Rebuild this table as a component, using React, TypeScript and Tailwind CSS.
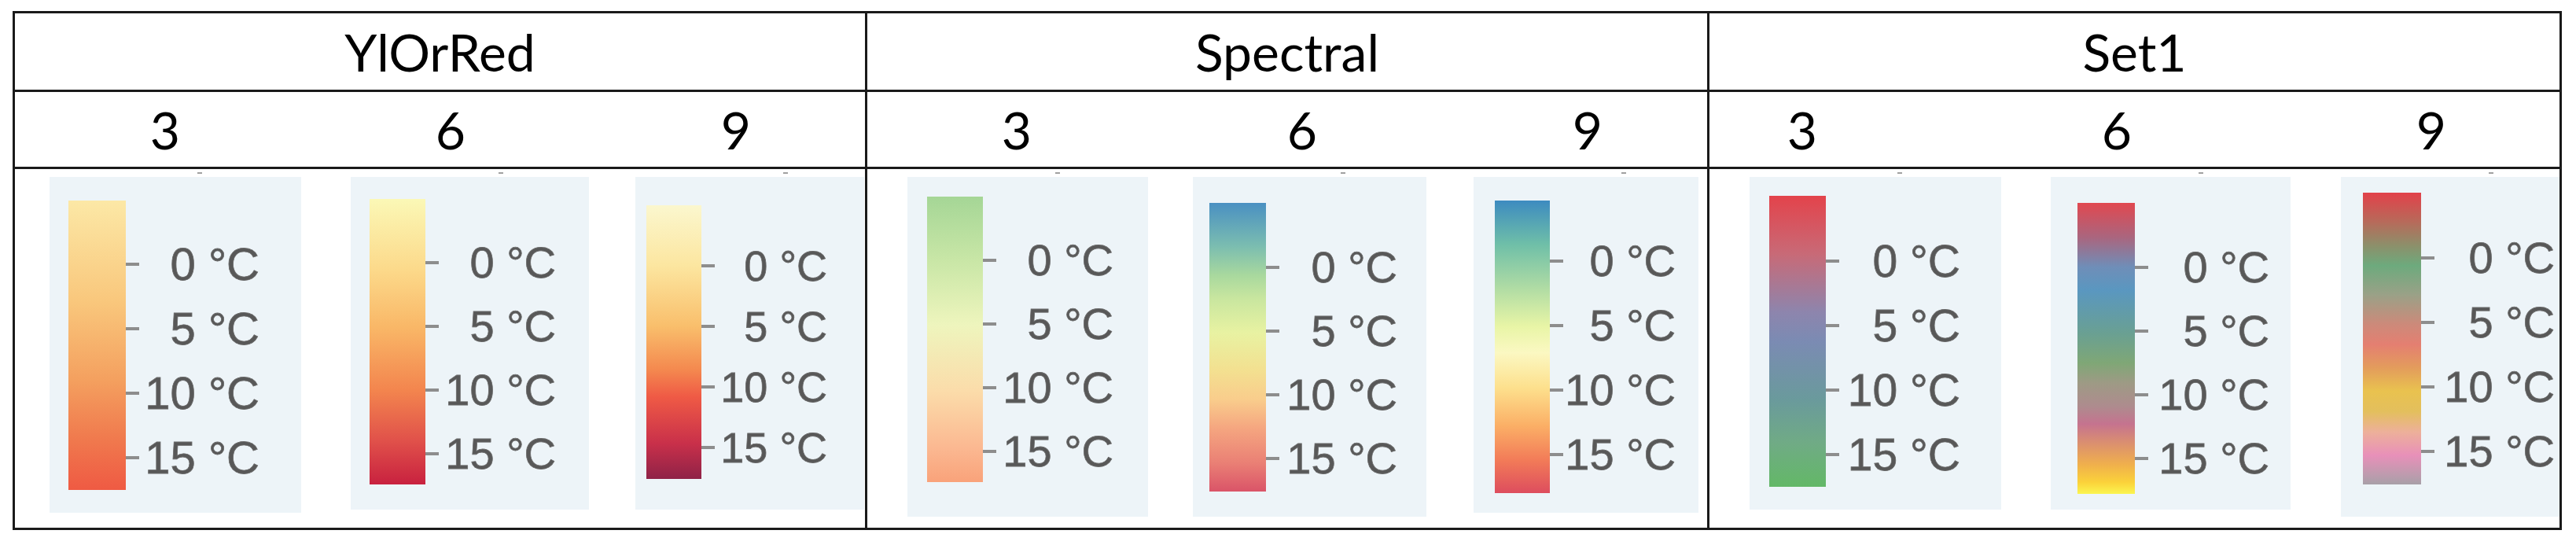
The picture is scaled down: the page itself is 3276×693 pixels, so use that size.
import React from 'react';

type Legend = {
  wrap: string;
  panel: string;
  bar: string;
  ticks: string;
  row: string;
  label: string;
};

type Scheme = {
  name: string;
  col: string;
  counts: string;
  legends: Legend[];
};

const labels = ['0 °C', '5 °C', '10 °C', '15 °C'];

const schemes: Scheme[] = [
  {
    name: 'YlOrRed',
    col: 'w-[1084px] border-r-[3px]',
    counts: 'pl-[141px] gap-[263px]',
    legends: [
      {
        wrap: 'ml-[44px] w-[320px]',
        panel: 'h-[427px] pl-[24px] pt-[30px]',
        bar: 'w-[73px] h-[368px] bg-[linear-gradient(to_bottom,#fce8a6,#f9c77c_35%,#f4a05f_62%,#f07a4e_82%,#ef5a43)]',
        ticks: 'pt-[40px]',
        row: 'h-[82px]',
        label: 'w-[153px] text-[58px]',
      },
      {
        wrap: 'ml-[63px] w-[303px]',
        panel: 'h-[423px] pl-[24px] pt-[28px]',
        bar: 'w-[71px] h-[363px] bg-[linear-gradient(to_bottom,#fbf8b6,#fcd98a_25%,#f9b767_45%,#f3854e_67%,#e0504a_85%,#c8213f)]',
        ticks: 'pt-[40px]',
        row: 'h-[81px]',
        label: 'w-[149px] text-[56px]',
      },
      {
        wrap: 'ml-[59px] w-[291px]',
        panel: 'h-[423px] pl-[14px] pt-[36px]',
        bar: 'w-[70px] h-[348px] bg-[linear-gradient(to_bottom,#fbf7ce,#fce6a0_22%,#f9bf6c_44%,#f4894f_60%,#ef5a45_70%,#c9304a_87%,#8f2247)]',
        ticks: 'pt-[38px]',
        row: 'h-[77px]',
        label: 'w-[143px] text-[54px]',
      },
    ],
  },
  {
    name: 'Spectral',
    col: 'w-[1071px] border-r-[3px]',
    counts: 'pl-[140px] gap-[263px]',
    legends: [
      {
        wrap: 'ml-[51px] w-[306px]',
        panel: 'h-[432px] pl-[25px] pt-[25px]',
        bar: 'w-[71px] h-[363px] bg-[linear-gradient(to_bottom,#a5d696,#c8e6a6_22%,#eef5bd_45%,#fbdcaa_68%,#fbb891_88%,#f9a27a)]',
        ticks: 'pt-[40px]',
        row: 'h-[81px]',
        label: 'w-[149px] text-[56px]',
      },
      {
        wrap: 'ml-[57px] w-[297px]',
        panel: 'h-[432px] pl-[21px] pt-[33px]',
        bar: 'w-[72px] h-[367px] bg-[linear-gradient(to_bottom,#4a90c2,#7bbdb0_15%,#a8d89e_25%,#c8e69f_33%,#e8f2a2_45%,#f3e090_58%,#f9cd8c_68%,#f5a680_78%,#ea8075_90%,#da5468)]',
        ticks: 'pt-[41px]',
        row: 'h-[81px]',
        label: 'w-[150px] text-[56px]',
      },
      {
        wrap: 'ml-[60px] w-[286px]',
        panel: 'h-[427px] pl-[27px] pt-[30px]',
        bar: 'w-[70px] h-[372px] bg-[linear-gradient(to_bottom,#3d8bc0,#6fbfa8_15%,#b0dca4_30%,#e8f5a6_43%,#fbf8c2_52%,#fde08d_64%,#fbaf66_77%,#f27a58_89%,#dd4d5e)]',
        ticks: 'pt-[36px]',
        row: 'h-[82px]',
        label: 'w-[143px] text-[56px]',
      },
    ],
  },
  {
    name: 'Set1',
    col: 'w-[1081px]',
    counts: 'pl-[68px] gap-[300px]',
    legends: [
      {
        wrap: 'ml-[51px] w-[320px]',
        panel: 'h-[423px] pl-[25px] pt-[24px]',
        bar: 'w-[72px] h-[370px] bg-[linear-gradient(to_bottom,#e3434b,#c86a77_20%,#8d85ad_40%,#7b8bb3_50%,#6a9a9c_70%,#70ab85_85%,#63b867)]',
        ticks: 'pt-[42px]',
        row: 'h-[82px]',
        label: 'w-[154px] text-[57px]',
      },
      {
        wrap: 'ml-[63px] w-[305px]',
        panel: 'h-[423px] pl-[34px] pt-[33px]',
        bar: 'w-[73px] h-[370px] bg-[linear-gradient(to_bottom,#e14850,#a9667f_12%,#6f8eb8_22%,#5a97c0_30%,#6aa092_45%,#7fa776_55%,#9e9a85_62%,#ae8b8e_70%,#c5738f_76%,#d98d72_82%,#f0b04c_90%,#fbd23a_96%,#fbf550)]',
        ticks: 'pt-[41px]',
        row: 'h-[81px]',
        label: 'w-[154px] text-[56px]',
      },
      {
        wrap: 'ml-[64px] w-[300px]',
        panel: 'h-[432px] pl-[28px] pt-[20px]',
        bar: 'w-[74px] h-[371px] bg-[linear-gradient(to_bottom,#e2414a,#b76a5a_10%,#8d8f6a_18%,#6daa7d_25%,#9aa187_35%,#cc8a7a_45%,#e47f71_52%,#e39c5c_60%,#e9c24f_68%,#e3bf5d_75%,#edb09a_82%,#e890b9_90%,#a8a0a8)]',
        ticks: 'pt-[42px]',
        row: 'h-[82px]',
        label: 'w-[153px] text-[56px]',
      },
    ],
  },
];

const ColorLegend = ({ legend }: { legend: Legend }) => (
  <div className={`${legend.wrap} shrink-0 flex flex-col`}>
    {/* little mark left over from the cropped screenshot */}
    <div className="ml-[188px] mt-[4px] mb-[4px] w-[6px] h-[2px] bg-[#a0a0a0]"></div>
    <div className={`${legend.panel} w-full bg-[#edf4f8] flex items-start`}>
      <div className={`${legend.bar} shrink-0`}></div>
      <div className={`${legend.ticks} flex flex-col font-["Liberation_Sans",Arial,sans-serif] text-[#585858] [-webkit-text-stroke:0.8px_#6a6a6a]`}>
        {labels.map((text) => (
          <div key={text} className={`${legend.row} flex items-center`}>
            <div className="w-[17px] h-[4px] bg-[#8d8d8d] shrink-0"></div>
            <span className={`${legend.label} text-right leading-none whitespace-nowrap`}>{text}</span>
          </div>
        ))}
      </div>
    </div>
  </div>
);

export default function App() {
  return (
    <div className="w-[3276px] h-[693px] bg-white pl-[16px] pt-[14px]">
      <div className="w-[3242px] h-[660px] border-[3px] border-[#1a1a1a] flex">
        {schemes.map((scheme) => (
          <div key={scheme.name} className={`${scheme.col} shrink-0 overflow-hidden border-[#1a1a1a] flex flex-col`}>
            {/* Scheme name */}
            <div className="h-[100px] shrink-0 border-b-[3px] border-[#1a1a1a] flex items-center justify-center text-[66px] leading-none text-black font-['Lato',sans-serif]">
              {scheme.name}
            </div>

            {/* Class counts */}
            <div className={`h-[98px] shrink-0 border-b-[3px] border-[#1a1a1a] flex items-center ${scheme.counts} text-[66px] leading-none text-black font-['Lato',sans-serif]`}>
              {['3', '6', '9'].map((n) => (
                <span key={n} className="w-[100px] shrink-0 text-center">
                  {n}
                </span>
              ))}
            </div>

            {/* Legends */}
            <div className="h-[456px] flex items-start overflow-hidden">
              {scheme.legends.map((legend, i) => (
                <ColorLegend key={i} legend={legend} />
              ))}
            </div>
          </div>
        ))}
      </div>
    </div>
  );
}
